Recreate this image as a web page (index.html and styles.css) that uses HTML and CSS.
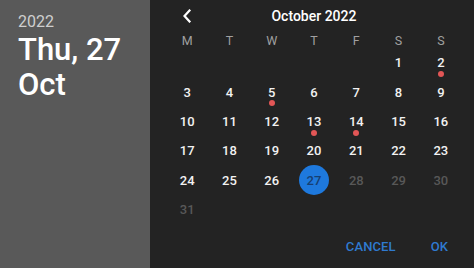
FILE: index.html
```html
<!DOCTYPE html>
<html lang="en">
<head>
    <meta charset="UTF-8">
    <meta name="viewport" content="width=device-width, initial-scale=1.0">
    <title>Date picker</title>
<link rel="stylesheet" href="styles.css">
</head>
<body>
  <div class="picker">
    <aside class="summary">
      <div class="year">2022</div>
      <div class="date">Thu, 27<br>Oct</div>
    </aside>
    <section class="cal">
      <header class="cal-head">
        <button class="prev" aria-label="Previous month">
          <svg width="12" height="14" viewBox="0 0 12 14"><path d="M8.5 1.5 L3.5 7 L8.5 12.5" fill="none" stroke="#fff" stroke-width="2.2" stroke-linecap="square"/></svg>
        </button>
        <h2 class="title">October 2022</h2>
      </header>
      <div class="grid weekdays">
        <span>M</span><span>T</span><span>W</span><span>T</span><span>F</span><span>S</span><span>S</span>
      </div>
      <div class="grid days">
        <span></span><span></span><span></span><span></span><span></span>
        <span>1</span><span class="ev">2</span>
        <span>3</span><span>4</span><span class="ev">5</span><span>6</span><span>7</span><span>8</span><span>9</span>
        <span>10</span><span>11</span><span>12</span><span class="ev">13</span><span class="ev">14</span><span>15</span><span>16</span>
        <span>17</span><span>18</span><span>19</span><span>20</span><span>21</span><span>22</span><span>23</span>
        <span>24</span><span>25</span><span>26</span><span class="sel">27</span><span class="off">28</span><span class="off">29</span><span class="off">30</span>
        <span class="off">31</span>
      </div>
      <footer class="actions">
        <button class="btn">CANCEL</button>
        <button class="btn">OK</button>
      </footer>
    </section>
  </div>
</body>
</html>
```

FILE: styles.css
```css
html, body {
  margin: 0;
  height: 100%;
  background: #232323;
  font-family: Roboto, "Liberation Sans", sans-serif;
}
.picker {
  display: flex;
  height: 268px;
}
.summary {
  width: 150px;
  flex: none;
  background: #595959;
  padding: 12px 0 0 18px;
  box-sizing: border-box;
  color: #fff;
}
.year {
  font-size: 16px;
  line-height: 20px;
  color: #cfcfcf;
}
.date {
  font-size: 31px;
  line-height: 35px;
  font-weight: 500;
}
.cal {
  flex: 1;
  padding: 0 12px 0 16px;
  display: flex;
  flex-direction: column;
  color: #fff;
}
.grid {
  display: grid;
  grid-template-columns: repeat(7, 1fr);
  text-align: center;
}
.cal-head {
  display: grid;
  grid-template-columns: repeat(7, 1fr);
  height: 32px;
  align-items: center;
}
.prev {
  background: none;
  border: 0;
  padding: 0;
  justify-self: center;
  display: flex;
}
.title {
  grid-column: 3 / 6;
  justify-self: center;
  margin: 0;
  white-space: nowrap;
  font-size: 14px;
  font-weight: 500;
}
.weekdays {
  height: 16px;
  align-items: center;
  font-size: 12.5px;
  color: #a0a0a0;
}
.days span {
  height: 29.4px;
  display: flex;
  align-items: center;
  justify-content: center;
  position: relative;
  font-size: 13px;
  font-weight: 500;
  color: #f2f2f2;
}
.days .ev::after {
  content: "";
  position: absolute;
  left: 50%;
  top: 23px;
  width: 6px;
  height: 6px;
  margin-left: -3px;
  border-radius: 50%;
  background: #e25656;
}
.days .off { color: #585858; }
.days .sel::before {
  content: "";
  position: absolute;
  left: 50%;
  top: 50%;
  width: 30px;
  height: 30px;
  margin: -15px 0 0 -15px;
  border-radius: 50%;
  background: #1e79dd;
}
.days .sel { color: #163f73; }
.days .sel { z-index: 0; }
.days .sel::before { z-index: -1; }
.actions {
  flex: 1;
  display: flex;
  justify-content: flex-end;
  align-items: center;
  gap: 35px;
  padding: 0 14px 0 0;
}
.btn {
  background: none;
  border: 0;
  padding: 0;
  font-family: inherit;
  font-size: 13px;
  font-weight: 500;
  color: #2f7ad0;
  letter-spacing: 0.1px;
}
```
